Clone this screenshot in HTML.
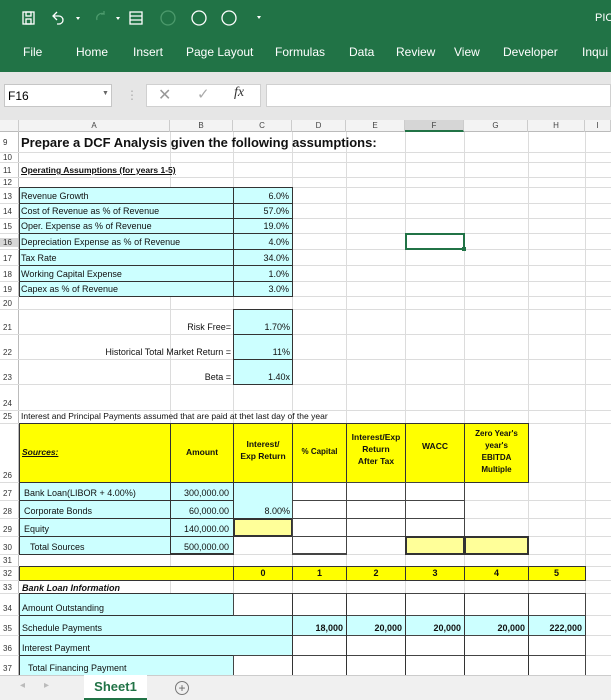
<!DOCTYPE html>
<html><head><meta charset="utf-8"><style>
*{margin:0;padding:0;box-sizing:border-box}
body{width:611px;height:700px;overflow:hidden;background:#fff;font-family:"Liberation Sans",sans-serif;position:relative}
.a{position:absolute}
.v{position:absolute;top:132px;height:543px;width:1px;background:#dcdcdc}
.h{position:absolute;left:0;width:611px;height:1px;background:#dcdcdc}
.rn{position:absolute;left:0;width:18px;font-size:8px;color:#333;text-align:left;padding-left:3px;background:#fff}
.t{position:absolute;font-size:9px;color:#111;white-space:nowrap}
.cy{position:absolute;background:#ccffff;border:1px solid #333}
.ye{position:absolute;background:#ffff00;border:1px solid #333}
.ly{position:absolute;background:#ffff99;border:1px solid #333}
.w{position:absolute;background:#fff;border:1px solid #444}
.r{text-align:right}
.b{font-weight:bold}
.tab{position:absolute;top:45px;font-size:12px;color:#fff}
.ch{position:absolute;top:120px;height:12px;font-size:8px;color:#444;text-align:center;border-right:1px solid #ccc;line-height:12px}
</style></head><body>
<div class="a" style="left:0;top:0;width:611px;height:72px;background:#217346"></div>
<svg class="a" style="left:0;top:0" width="611" height="72">
<g fill="none" stroke="#fff" stroke-width="1.3">
<rect x="23" y="12" width="11" height="12"/><rect x="26" y="12" width="5" height="4"/><rect x="26" y="19" width="5" height="5"/>
<path d="M57 12 l-4 4 l4 4 M53 16 h6 a4 4 0 0 1 0 8 h-2"/>
<rect x="130" y="12" width="12" height="12"/><path d="M130 16h12M130 20h12"/>
<circle cx="199" cy="18" r="7"/><circle cx="229" cy="18" r="7"/>
</g>
<g fill="none" stroke="#4c9a6c" stroke-width="1.3"><path d="M97 20 a5 5 0 0 1 7 -6 l0 -3 M104 14 l-3 0"/><circle cx="168" cy="18" r="7"/></g>
<path d="M76 17h4l-2 3z M116 17h4l-2 3z M257 16h4l-2 3z" fill="#fff"/>
<text x="595" y="21" fill="#fff" font-size="11" font-family="Liberation Sans">PIC</text>
</svg>
<div class="tab" style="left:23px">File</div>
<div class="tab" style="left:76px">Home</div>
<div class="tab" style="left:133px">Insert</div>
<div class="tab" style="left:186px">Page Layout</div>
<div class="tab" style="left:275px">Formulas</div>
<div class="tab" style="left:349px">Data</div>
<div class="tab" style="left:396px">Review</div>
<div class="tab" style="left:454px">View</div>
<div class="tab" style="left:503px">Developer</div>
<div class="tab" style="left:582px">Inqui</div>
<div class="a" style="left:0;top:72px;width:611px;height:48px;background:#e6e6e6"></div>
<div class="a" style="left:4px;top:84px;width:108px;height:23px;background:#fff;border:1px solid #c6c6c6;font-size:12px;padding:4px 0 0 3px">F16<span style="position:absolute;left:97px;top:5px;font-size:7px;color:#666">▼</span></div>
<div class="a" style="left:126px;top:88px;font-size:12px;color:#aaa">⋮</div>
<div class="a" style="left:146px;top:84px;width:115px;height:23px;background:#fff;border:1px solid #d0d0d0"></div>
<div class="a" style="left:158px;top:85px;font-size:16px;color:#999">✕</div>
<div class="a" style="left:197px;top:85px;font-size:15px;color:#aaa">✓</div>
<div class="a" style="left:234px;top:85px;font-size:14px;font-style:italic;font-family:'Liberation Serif',serif;color:#333">fx</div>
<div class="a" style="left:266px;top:84px;width:345px;height:23px;background:#fff;border:1px solid #d0d0d0"></div>
<div class="a" style="left:0;top:120px;width:611px;height:12px;background:#f3f3f3;border-bottom:1px solid #bbb"></div>
<div class="ch" style="left:0;width:19px"></div>
<div class="ch" style="left:19px;width:151px">A</div>
<div class="ch" style="left:170px;width:63px">B</div>
<div class="ch" style="left:233px;width:59px">C</div>
<div class="ch" style="left:292px;width:54px">D</div>
<div class="ch" style="left:346px;width:59px">E</div>
<div class="ch" style="left:405px;width:59px;background:#d6d6d6;border-bottom:2px solid #217346">F</div>
<div class="ch" style="left:464px;width:64px">G</div>
<div class="ch" style="left:528px;width:57px">H</div>
<div class="ch" style="left:585px;width:26px">I</div>
<div class="v" style="left:18px;background:#bbb"></div>
<div class="v" style="left:170px"></div><div class="v" style="left:233px"></div><div class="v" style="left:292px"></div><div class="v" style="left:346px"></div><div class="v" style="left:405px"></div><div class="v" style="left:464px"></div><div class="v" style="left:528px"></div><div class="v" style="left:585px"></div>
<div class="h" style="top:152px"></div><div class="h" style="top:162px"></div><div class="h" style="top:177px"></div><div class="h" style="top:187px"></div><div class="h" style="top:203px"></div><div class="h" style="top:218px"></div><div class="h" style="top:233px"></div><div class="h" style="top:249px"></div><div class="h" style="top:265px"></div><div class="h" style="top:281px"></div><div class="h" style="top:296px"></div><div class="h" style="top:309px"></div><div class="h" style="top:334px"></div><div class="h" style="top:359px"></div><div class="h" style="top:384px"></div><div class="h" style="top:410px"></div><div class="h" style="top:423px"></div><div class="h" style="top:482px"></div><div class="h" style="top:500px"></div><div class="h" style="top:518px"></div><div class="h" style="top:536px"></div><div class="h" style="top:554px"></div><div class="h" style="top:566px"></div><div class="h" style="top:580px"></div><div class="h" style="top:593px"></div><div class="h" style="top:615px"></div><div class="h" style="top:635px"></div><div class="h" style="top:655px"></div>
<div class="rn" style="top:138px">9</div><div class="rn" style="top:153px">10</div><div class="rn" style="top:166px">11</div><div class="rn" style="top:178px">12</div><div class="rn" style="top:192px">13</div><div class="rn" style="top:207px">14</div><div class="rn" style="top:222px">15</div><div class="rn" style="top:238px;background:#d6d6d6">16</div><div class="rn" style="top:254px">17</div><div class="rn" style="top:270px">18</div><div class="rn" style="top:285px">19</div><div class="rn" style="top:299px">20</div><div class="rn" style="top:323px">21</div><div class="rn" style="top:348px">22</div><div class="rn" style="top:373px">23</div><div class="rn" style="top:399px">24</div><div class="rn" style="top:412px">25</div><div class="rn" style="top:471px">26</div><div class="rn" style="top:489px">27</div><div class="rn" style="top:507px">28</div><div class="rn" style="top:525px">29</div><div class="rn" style="top:543px">30</div><div class="rn" style="top:556px">31</div><div class="rn" style="top:569px">32</div><div class="rn" style="top:583px">33</div><div class="rn" style="top:604px">34</div><div class="rn" style="top:624px">35</div><div class="rn" style="top:644px">36</div><div class="rn" style="top:664px">37</div>
<div class="t b" style="left:21px;top:135px;font-size:13px">Prepare a DCF Analysis given the following assumptions:</div>
<div class="t b" style="left:21px;top:165px;text-decoration:underline;font-size:8.5px">Operating Assumptions (for years 1-5)</div>
<div class="cy" style="left:19px;top:187px;width:215px;height:110px"></div>
<div class="cy" style="left:233px;top:187px;width:60px;height:110px"></div>
<div class="a" style="left:19px;top:203px;width:274px;height:1px;background:#333"></div><div class="a" style="left:19px;top:218px;width:274px;height:1px;background:#333"></div><div class="a" style="left:19px;top:233px;width:274px;height:1px;background:#333"></div><div class="a" style="left:19px;top:249px;width:274px;height:1px;background:#333"></div><div class="a" style="left:19px;top:265px;width:274px;height:1px;background:#333"></div><div class="a" style="left:19px;top:281px;width:274px;height:1px;background:#333"></div>
<div class="t" style="left:21px;top:191px">Revenue Growth</div><div class="t r" style="left:233px;width:56px;top:191px">6.0%</div>
<div class="t" style="left:21px;top:206px">Cost of Revenue as % of Revenue</div><div class="t r" style="left:233px;width:56px;top:206px">57.0%</div>
<div class="t" style="left:21px;top:221px">Oper. Expense as % of Revenue</div><div class="t r" style="left:233px;width:56px;top:221px">19.0%</div>
<div class="t" style="left:21px;top:237px">Depreciation Expense as % of Revenue</div><div class="t r" style="left:233px;width:56px;top:237px">4.0%</div>
<div class="t" style="left:21px;top:253px">Tax Rate</div><div class="t r" style="left:233px;width:56px;top:253px">34.0%</div>
<div class="t" style="left:21px;top:269px">Working Capital Expense</div><div class="t r" style="left:233px;width:56px;top:269px">1.0%</div>
<div class="t" style="left:21px;top:284px">Capex as % of Revenue</div><div class="t r" style="left:233px;width:56px;top:284px">3.0%</div>
<div class="a" style="left:405px;top:233px;width:60px;height:17px;border:2px solid #217346"></div>
<div class="a" style="left:462px;top:247px;width:4px;height:4px;background:#217346"></div>
<div class="cy" style="left:233px;top:309px;width:60px;height:26px"></div>
<div class="cy" style="left:233px;top:334px;width:60px;height:26px"></div>
<div class="cy" style="left:233px;top:359px;width:60px;height:26px"></div>
<div class="t r" style="left:100px;width:131px;top:322px">Risk Free=</div><div class="t r" style="left:233px;width:57px;top:322px">1.70%</div>
<div class="t r" style="left:60px;width:171px;top:347px">Historical Total Market Return =</div><div class="t r" style="left:233px;width:57px;top:347px">11%</div>
<div class="t r" style="left:100px;width:131px;top:372px">Beta =</div><div class="t r" style="left:233px;width:57px;top:372px">1.40x</div>
<div class="t" style="left:21px;top:411px;font-size:8.5px">Interest and Principal Payments assumed that are paid at thet last day of the year</div>
<div class="ye" style="left:19px;top:423px;width:152px;height:60px"></div>
<div class="ye" style="left:170px;top:423px;width:64px;height:60px"></div>
<div class="ye" style="left:233px;top:423px;width:60px;height:60px"></div>
<div class="ye" style="left:292px;top:423px;width:55px;height:60px"></div>
<div class="ye" style="left:346px;top:423px;width:60px;height:60px"></div>
<div class="ye" style="left:405px;top:423px;width:60px;height:60px"></div>
<div class="ye" style="left:464px;top:423px;width:65px;height:60px"></div>
<div class="t b" style="left:22px;top:447px;font-size:8.5px;font-style:italic;text-decoration:underline">Sources:</div>
<div class="t b" style="left:170px;width:64px;text-align:center;top:447px;font-size:8.5px">Amount</div>
<div class="t b" style="left:233px;width:60px;text-align:center;top:438px;font-size:8.5px;line-height:12px;white-space:normal">Interest/<br>Exp Return</div>
<div class="t b" style="left:292px;width:55px;text-align:center;top:447px;font-size:8px">% Capital</div>
<div class="t b" style="left:346px;width:60px;text-align:center;top:431px;font-size:8.5px;line-height:12px">Interest/Exp<br>Return<br>After Tax</div>
<div class="t b" style="left:405px;width:60px;text-align:center;top:441px;font-size:8.5px">WACC</div>
<div class="t b" style="left:464px;width:65px;text-align:center;top:428px;font-size:8px;line-height:12px">Zero Year's<br>year's<br>EBITDA<br>Multiple</div>
<div class="cy" style="left:19px;top:482px;width:152px;height:73px"></div>
<div class="cy" style="left:170px;top:482px;width:64px;height:73px;border-bottom:2px solid #333"></div>
<div class="cy" style="left:233px;top:482px;width:60px;height:37px"></div>
<div class="ly" style="left:233px;top:518px;width:60px;height:19px;border-width:2px"></div>
<div class="a" style="left:19px;top:500px;width:215px;height:1px;background:#333"></div><div class="a" style="left:19px;top:518px;width:215px;height:1px;background:#333"></div><div class="a" style="left:19px;top:536px;width:215px;height:1px;background:#333"></div>
<div class="w" style="left:292px;top:482px;width:55px;height:19px"></div><div class="w" style="left:346px;top:482px;width:60px;height:19px"></div><div class="w" style="left:405px;top:482px;width:60px;height:19px"></div>
<div class="w" style="left:292px;top:500px;width:55px;height:19px"></div><div class="w" style="left:346px;top:500px;width:60px;height:19px"></div><div class="w" style="left:405px;top:500px;width:60px;height:19px"></div>
<div class="w" style="left:292px;top:518px;width:55px;height:19px"></div><div class="w" style="left:346px;top:518px;width:60px;height:19px"></div><div class="w" style="left:405px;top:518px;width:60px;height:19px"></div>
<div class="w" style="left:292px;top:536px;width:55px;height:19px;border-bottom-width:2px"></div>
<div class="ly" style="left:405px;top:536px;width:60px;height:19px;border-width:2px"></div>
<div class="ly" style="left:464px;top:536px;width:65px;height:19px;border-width:2px"></div>
<div class="t" style="left:24px;top:488px">Bank Loan(LIBOR + 4.00%)</div><div class="t r" style="left:170px;width:59px;top:488px">300,000.00</div>
<div class="t" style="left:24px;top:506px">Corporate Bonds</div><div class="t r" style="left:170px;width:59px;top:506px">60,000.00</div><div class="t r" style="left:233px;width:57px;top:506px">8.00%</div>
<div class="t" style="left:24px;top:524px">Equity</div><div class="t r" style="left:170px;width:59px;top:524px">140,000.00</div>
<div class="t" style="left:30px;top:542px">Total Sources</div><div class="t r" style="left:170px;width:59px;top:542px">500,000.00</div>
<div class="ye" style="left:19px;top:566px;width:567px;height:15px"></div>
<div class="a" style="left:233px;top:566px;width:1px;height:15px;background:#333"></div><div class="a" style="left:292px;top:566px;width:1px;height:15px;background:#333"></div><div class="a" style="left:346px;top:566px;width:1px;height:15px;background:#333"></div><div class="a" style="left:405px;top:566px;width:1px;height:15px;background:#333"></div><div class="a" style="left:464px;top:566px;width:1px;height:15px;background:#333"></div><div class="a" style="left:528px;top:566px;width:1px;height:15px;background:#333"></div>
<div class="t b" style="left:233px;width:60px;text-align:center;top:568px">0</div><div class="t b" style="left:292px;width:55px;text-align:center;top:568px">1</div><div class="t b" style="left:346px;width:60px;text-align:center;top:568px">2</div><div class="t b" style="left:405px;width:60px;text-align:center;top:568px">3</div><div class="t b" style="left:464px;width:65px;text-align:center;top:568px">4</div><div class="t b" style="left:528px;width:57px;text-align:center;top:568px">5</div>
<div class="t b" style="left:22px;top:583px;font-style:italic">Bank Loan Information</div>
<div class="cy" style="left:19px;top:593px;width:567px;height:83px"></div>
<div class="a" style="left:19px;top:615px;width:567px;height:1px;background:#333"></div><div class="a" style="left:19px;top:635px;width:567px;height:1px;background:#333"></div><div class="a" style="left:19px;top:655px;width:567px;height:1px;background:#333"></div>
<div class="w" style="left:233px;top:593px;width:353px;height:23px"></div>
<div class="w" style="left:292px;top:635px;width:294px;height:21px"></div>
<div class="w" style="left:233px;top:655px;width:353px;height:21px"></div>
<div class="a" style="left:292px;top:593px;width:1px;height:83px;background:#333"></div><div class="a" style="left:346px;top:593px;width:1px;height:83px;background:#333"></div><div class="a" style="left:405px;top:593px;width:1px;height:83px;background:#333"></div><div class="a" style="left:464px;top:593px;width:1px;height:83px;background:#333"></div><div class="a" style="left:528px;top:593px;width:1px;height:83px;background:#333"></div>
<div class="t" style="left:22px;top:603px">Amount Outstanding</div>
<div class="t" style="left:22px;top:623px">Schedule Payments</div>
<div class="t b r" style="left:292px;width:51px;top:623px">18,000</div><div class="t b r" style="left:346px;width:56px;top:623px">20,000</div><div class="t b r" style="left:405px;width:56px;top:623px">20,000</div><div class="t b r" style="left:464px;width:61px;top:623px">20,000</div><div class="t b r" style="left:528px;width:54px;top:623px">222,000</div>
<div class="t" style="left:22px;top:643px">Interest Payment</div>
<div class="t" style="left:28px;top:663px">Total Financing Payment</div>
<div class="a" style="left:0;top:675px;width:611px;height:25px;background:#f0f0f0;border-top:1px solid #ccc"></div>
<div class="a" style="left:20px;top:680px;font-size:10px;color:#bbb">◂</div>
<div class="a" style="left:44px;top:680px;font-size:10px;color:#bbb">▸</div>
<div class="a" style="left:84px;top:675px;width:63px;height:25px;background:#fff;border-bottom:2px solid #217346;font-size:13px;font-weight:bold;color:#217346;text-align:center;line-height:24px">Sheet1</div>
<div class="a" style="left:175px;top:681px;width:14px;height:14px;border:1px solid #777;border-radius:50%;font-size:12px;line-height:12px;text-align:center;color:#666">+</div>
</body></html>
